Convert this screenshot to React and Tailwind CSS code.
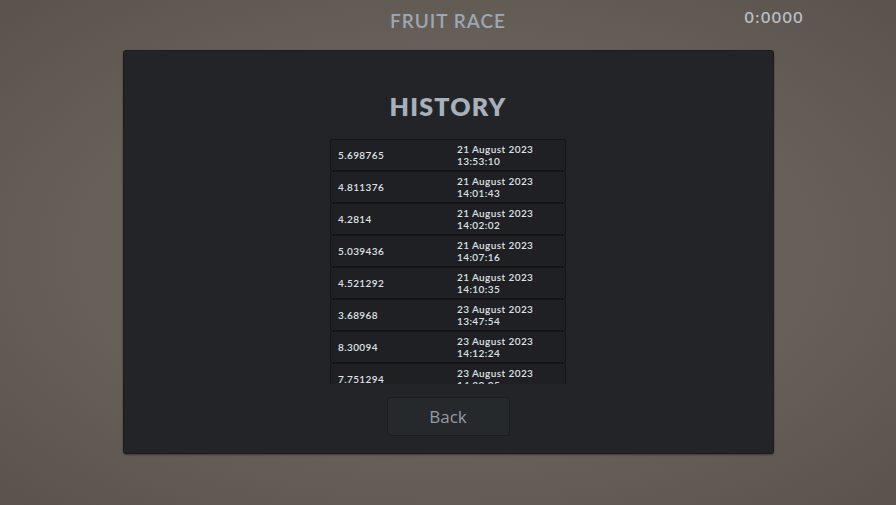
import React from 'react';

const history = [
  { time: '5.698765', date: '21 August 2023', clock: '13:53:10' },
  { time: '4.811376', date: '21 August 2023', clock: '14:01:43' },
  { time: '4.2814', date: '21 August 2023', clock: '14:02:02' },
  { time: '5.039436', date: '21 August 2023', clock: '14:07:16' },
  { time: '4.521292', date: '21 August 2023', clock: '14:10:35' },
  { time: '3.68968', date: '23 August 2023', clock: '13:47:54' },
  { time: '8.30094', date: '23 August 2023', clock: '14:12:24' },
  { time: '7.751294', date: '23 August 2023', clock: '14:20:05' },
];

const App = () => {
  return (
    <div className="w-[896px] h-[505px] overflow-hidden bg-[radial-gradient(ellipse_at_center,#6f6861_0%,#665f58_60%,#5a534d_100%)] font-['Lato',sans-serif]">
      <div className="grid grid-cols-[1fr_auto_1fr] items-center h-[42px] pt-[1px]">
        <div />
        <h1 className="text-[19px] font-semibold tracking-[1px] text-[#9ca8b4]">
          FRUIT RACE
        </h1>
        <div className="justify-self-end pr-[92px] -mt-[9px] text-[16px] font-semibold tracking-[1.5px] text-[#b9c0c7]">
          0:0000
        </div>
      </div>

      <div className="mx-auto mt-[8px] w-[651px] h-[404px] rounded-[3px] bg-[#222427] border border-[#1b1c1e] shadow-[0_1px_2px_rgba(0,0,0,0.4)] flex flex-col items-center">
        <h2 className="mt-[40px] text-[25px] leading-[30px] font-extrabold tracking-[1.2px] text-[#a6b1bc]">
          HISTORY
        </h2>

        <div className="mt-[18px] w-[236px] h-[245px] overflow-hidden flex flex-col">
          {history.map((row) => (
            <div
              key={row.time}
              className="shrink-0 flex h-[32px] bg-[#1e2023] border border-[#131416] rounded-[2px] text-[#dfe2e5] text-[10px] leading-[12px] font-semibold tracking-[0.4px]"
            >
              <div className="w-[125px] pl-[7px] flex items-center">{row.time}</div>
              <div className="pl-[1px] flex flex-col justify-center">
                <span>{row.date}</span>
                <span>{row.clock}</span>
              </div>
            </div>
          ))}
        </div>

        <button className="mt-[13px] w-[123px] h-[39px] rounded-[4px] bg-[#26292c] border border-[#1a1c1e] text-[17px] text-[#949ba2] font-['Open_Sans',sans-serif]">
          Back
        </button>
      </div>
    </div>
  );
};

export default App;
